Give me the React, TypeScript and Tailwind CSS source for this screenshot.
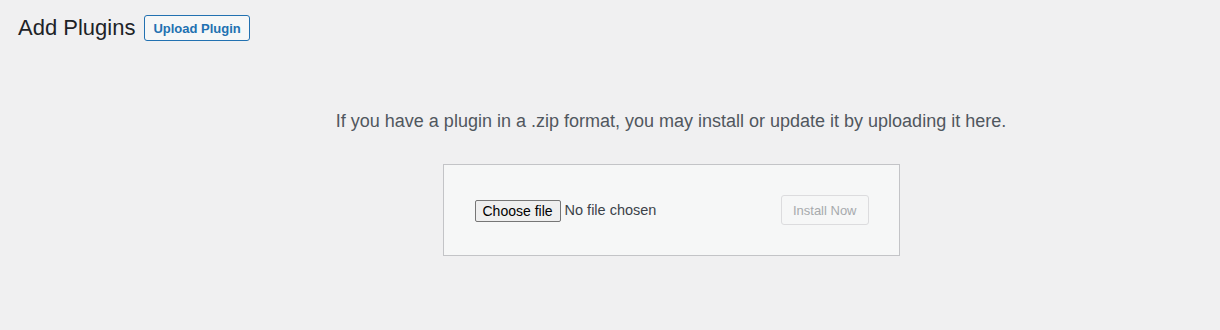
export default function App() {
  return (
    <div className="w-[1220px] h-[330px] bg-[#f0f0f1] text-[#3c434a] overflow-hidden" style={{ fontFamily: '"Liberation Sans", Arial, sans-serif' }}>
      <div className="pl-[18px] pt-[13px] flex items-center gap-[9px]">
        <h1 className="text-[22px] leading-[30px] font-normal text-[#1d2327]">Add Plugins</h1>
        <button className="h-[26px] px-[8px] border border-[#2271b1] rounded-[3px] bg-[#f6f7f7] text-[#2271b1] text-[13px] font-semibold leading-none">
          Upload Plugin
        </button>
      </div>
      <div className="flex flex-col items-center pl-[122px] pt-[66px]">
        <p className="text-[18px] leading-[24px] text-[#50575e]">
          If you have a plugin in a .zip format, you may install or update it by uploading it here.
        </p>
        <div className="mt-[31px] w-[457px] h-[92px] border border-[#c3c4c7] bg-[#f6f7f7] flex items-center justify-between pl-[31px] pr-[30px]">
          <div className="flex items-center gap-[4px] pt-[2px]">
            <span className="h-[22px] px-[7px] border border-[#767676] rounded-[2px] bg-[#efefef] text-[14px] leading-[20px] text-black">
              Choose file
            </span>
            <span className="text-[14.5px] text-[#3c434a]">No file chosen</span>
          </div>
          <button className="h-[30px] px-[11px] border border-[#dcdcde] rounded-[3px] bg-[#f6f7f7] text-[#a7aaad] text-[13px] leading-none">
            Install Now
          </button>
        </div>
      </div>
    </div>
  );
}
